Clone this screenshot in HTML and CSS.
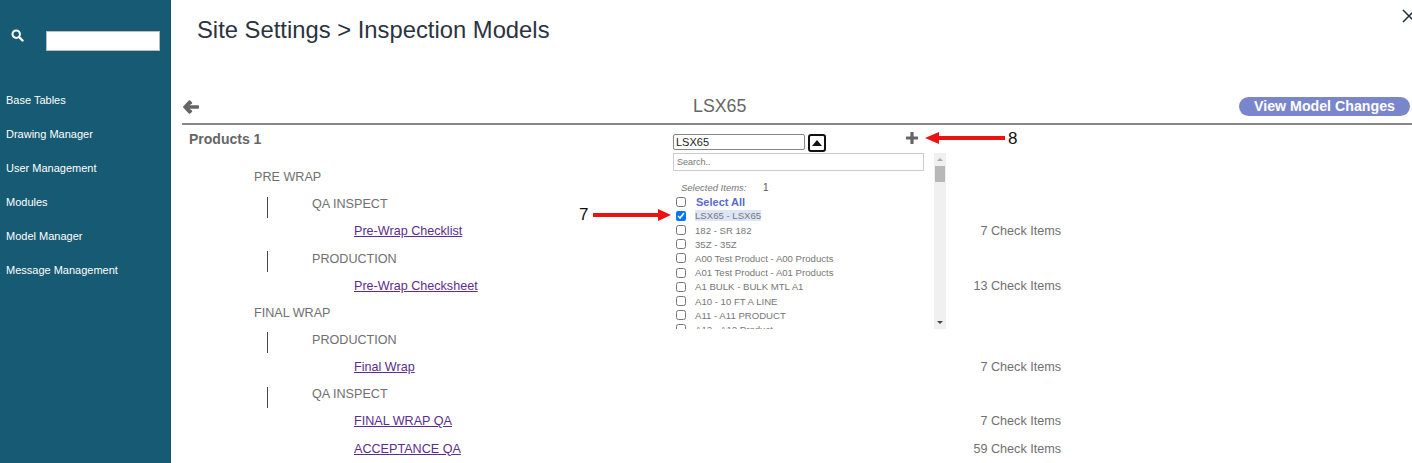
FILE: index.html
```html
<!DOCTYPE html>
<html lang="en">
<head>
  <meta charset="UTF-8" />
  <title>Site Settings - Inspection Models</title>
  <link rel="stylesheet" href="styles.css">
</head>
<body>
  <aside class="sidebar">
    <div class="side-search">
      <svg class="search-icon" viewBox="0 0 14 14" width="13" height="13">
        <circle cx="5.6" cy="5.6" r="4" fill="none" stroke="#fff" stroke-width="2.2"/>
        <path d="M8.6 8.6 L12.4 12.4" stroke="#fff" stroke-width="2.6" stroke-linecap="round"/>
      </svg>
      <input class="side-input" type="text">
    </div>
    <nav class="side-nav">
      <a href="#">Base Tables</a>
      <a href="#">Drawing Manager</a>
      <a href="#">User Management</a>
      <a href="#">Modules</a>
      <a href="#">Model Manager</a>
      <a href="#">Message Management</a>
    </nav>
  </aside>

  <main class="main">
    <div class="title-bar">
      <h1>Site Settings &gt; Inspection Models</h1>
      <svg class="close-x" viewBox="0 0 14 14" width="14" height="14">
        <path d="M1 1 L13 13 M13 1 L1 13" stroke="#1f2a3a" stroke-width="1.5" fill="none"/>
      </svg>
    </div>

    <div class="model-head">
      <svg class="back" viewBox="0 0 16 14" width="16" height="14">
        <path d="M7.2 0.6 L8.9 2.3 a1 1 0 0 1 0 1.4 L6.6 5.2 H15 a1 1 0 0 1 1 1 V7.8 a1 1 0 0 1 -1 1 H6.6 L8.9 10.6 a1 1 0 0 1 0 1.4 L7.2 13.5 a1 1 0 0 1 -1.4 0 L0.4 7.7 a1 1 0 0 1 0 -1.4 L5.8 0.6 a1 1 0 0 1 1.4 0 Z" fill="#666"/>
      </svg>
      <span class="model-name">LSX65</span>
      <button class="changes-btn">View Model Changes</button>
    </div>

    <section class="content">
      <h2 class="products">Products 1</h2>

      <div class="row lvl1">PRE WRAP</div>
      <div class="row lvl2"><span class="bar"></span>QA INSPECT</div>
      <div class="row lvl3"><a href="#">Pre-Wrap Checklist</a><span class="count">7 Check Items</span></div>
      <div class="row lvl2"><span class="bar"></span>PRODUCTION</div>
      <div class="row lvl3"><a href="#">Pre-Wrap Checksheet</a><span class="count">13 Check Items</span></div>
      <div class="row lvl1">FINAL WRAP</div>
      <div class="row lvl2"><span class="bar"></span>PRODUCTION</div>
      <div class="row lvl3"><a href="#">Final Wrap</a><span class="count">7 Check Items</span></div>
      <div class="row lvl2"><span class="bar"></span>QA INSPECT</div>
      <div class="row lvl3"><a href="#">FINAL WRAP QA</a><span class="count">7 Check Items</span></div>
      <div class="row lvl3"><a href="#">ACCEPTANCE QA</a><span class="count">59 Check Items</span></div>

      <div class="picker">
        <div class="picker-top">
          <input class="picker-value" type="text" value="LSX65">
          <button class="picker-toggle"><span class="tri"></span></button>
          <svg class="plus" viewBox="0 0 12 12" width="12" height="12">
            <path d="M6 1 V11 M1 6 H11" stroke="#666" stroke-width="3.2" stroke-linecap="round"/>
          </svg>
        </div>
        <div class="picker-body">
          <div class="picker-main">
            <input class="picker-search" type="text" placeholder="Search..">
            <div class="selected-info"><em>Selected Items:</em><span>1</span></div>
            <ul class="items">
              <li class="select-all"><input type="checkbox"><label>Select All</label></li>
              <li class="picked"><input type="checkbox" checked><label>LSX65 - LSX65</label></li>
              <li><input type="checkbox"><label>182 - SR 182</label></li>
              <li><input type="checkbox"><label>35Z - 35Z</label></li>
              <li><input type="checkbox"><label>A00 Test Product - A00 Products</label></li>
              <li><input type="checkbox"><label>A01 Test Product - A01 Products</label></li>
              <li><input type="checkbox"><label>A1 BULK - BULK MTL A1</label></li>
              <li><input type="checkbox"><label>A10 - 10 FT A LINE</label></li>
              <li><input type="checkbox"><label>A11 - A11 PRODUCT</label></li>
              <li><input type="checkbox"><label>A12 - A12 Product</label></li>
            </ul>
          </div>
          <div class="scroll">
            <span class="arrow-up"></span>
            <span class="thumb"></span>
            <span class="arrow-down"></span>
          </div>
        </div>
      </div>
    </section>
  </main>

  <!-- red callouts drawn on top of the screenshot -->
  <div class="callout call-8">
    <svg viewBox="0 0 80 12" width="80" height="12"><path d="M0 6 L14 0 V4 H80 V8 H14 V12 Z" fill="#ee1111"/></svg>
    <span>8</span>
  </div>
  <div class="callout call-7">
    <span>7</span>
    <svg viewBox="0 0 78 12" width="78" height="12"><path d="M78 6 L65 0 V4 H0 V8 H65 V12 Z" fill="#ee1111"/></svg>
  </div>
</body>
</html>
```

FILE: styles.css
```css
* { box-sizing: border-box; }
html, body { height: 100%; }
body {
  margin: 0;
  height: 463px;
  overflow: hidden;
  display: flex;
  font-family: "Liberation Sans", Arial, sans-serif;
  color: #666;
  background: #fff;
}

/* sidebar */
.sidebar { width: 171px; flex: none; background: #175a74; color: #fff; border-right: 1px solid #14506a; }
.side-search { display: flex; align-items: flex-start; padding: 29px 0 0 11px; height: 85px; }
.search-icon { margin-right: 22px; }
.side-input { width: 114px; height: 20px; margin-top: 2px; padding: 0; border: 1px solid #bbb; background: #fff; }
.side-nav a { display: block; height: 34px; padding-left: 6px; line-height: 30px; font-size: 11px; color: #fff; text-decoration: none; }

/* main column */
.main { flex: 1; min-width: 0; padding-left: 11px; }
.title-bar { display: flex; justify-content: space-between; height: 90px; padding: 16px 0 0 15px; }
.title-bar h1 { margin: 0; font-size: 23.8px; font-weight: 400; line-height: 27px; color: #2b3340; }
.close-x { margin: -7px -4px 0 0; flex: none; }

.model-head {
  display: flex;
  align-items: center;
  justify-content: space-between;
  position: relative;
  height: 35px;
  padding: 0 2px 1px 1px;
  border-bottom: 2px solid #888;
}
.back { margin-top: 2px; }
.model-name { font-size: 17.8px; position: absolute; left: 511px; top: 6px; }
.changes-btn {
  width: 171px;
  height: 19px;
  padding: 0;
  border: 0;
  border-radius: 10px;
  background: #7a86cc;
  color: #fff;
  font: bold 14.2px "Liberation Sans", Arial, sans-serif;
}

.content { position: relative; }
.products { margin: 0; height: 38.6px; padding: 6px 0 0 7px; font-size: 14px; line-height: 16px; }

.row { display: flex; align-items: center; height: 27.15px; font-size: 12.6px; position: relative; color: #707070; }
.lvl1 { padding-left: 72px; }
.lvl2 { padding-left: 130px; }
.lvl3 { padding-left: 172px; }
.row a { color: #5b2d8e; }
.bar { position: absolute; left: 85px; top: 6px; width: 1px; height: 21px; background: #444; }
.count { position: absolute; right: 351px; }

/* product picker, open over the list */
.picker { position: absolute; left: 491px; top: 9px; width: 275px; }
.picker-top { display: flex; align-items: flex-start; height: 19px; }
.picker-value { width: 132px; height: 16px; padding: 0 2px; border: 1px solid #888; border-radius: 2px; font: 11px "Liberation Sans", Arial, sans-serif; color: #222; }
.picker-toggle { width: 18px; height: 18px; margin-left: 3px; padding: 0; border: 2px solid #111; border-radius: 3px; background: #fff; display: flex; align-items: center; justify-content: center; }
.tri { width: 0; height: 0; border-left: 5px solid transparent; border-right: 5px solid transparent; border-bottom: 6px solid #111; }
.plus { margin: -2px 0 0 80px; }

.picker-body { display: flex; height: 176px; overflow: hidden; }
.picker-main { width: 251px; }
.picker-search { display: block; width: 251px; height: 18px; padding: 0 3px; border: 1px solid #ccc; font: 9px "Liberation Sans", Arial, sans-serif; }
.picker-search::placeholder { color: #777; }
.selected-info { padding: 11px 0 0 8px; height: 23.6px; font-size: 9.5px; line-height: 12px; color: #777; white-space: nowrap; }
.selected-info em { display: inline-block; width: 82px; }
.selected-info span { color: #555; font-size: 10px; }
.items { list-style: none; margin: 0; padding: 0 0 0 3px; }
.items li { display: flex; align-items: center; height: 14.2px; font-size: 9.6px; color: #777; white-space: nowrap; }
.items input { width: 10px; height: 10px; margin: 0 9px 0 0; flex: none; }
.select-all label { color: #5a6bc8; font-weight: bold; font-size: 11px; margin-left: 1px; }
.picked label { background: #dde5f7; }

.scroll { width: 12px; margin-left: 10px; background: #f0f0f0; position: relative; }
.thumb { position: absolute; left: 1px; top: 13px; width: 10px; height: 16px; background: #b8b8b8; }
.arrow-up, .arrow-down { position: absolute; left: 3px; width: 0; height: 0; border-left: 3px solid transparent; border-right: 3px solid transparent; }
.arrow-up { top: 5px; border-bottom: 3px solid #aaa; }
.arrow-down { bottom: 5px; border-top: 3px solid #444; }

/* callouts */
.callout { position: absolute; display: flex; align-items: center; font-size: 17px; line-height: 20px; color: #111; }
.callout svg { flex: none; }
.call-8 { left: 925px; top: 129px; gap: 3px; }
.call-8 svg { margin-top: -2px; }
.call-7 { left: 579px; top: 205px; gap: 5px; }
```
